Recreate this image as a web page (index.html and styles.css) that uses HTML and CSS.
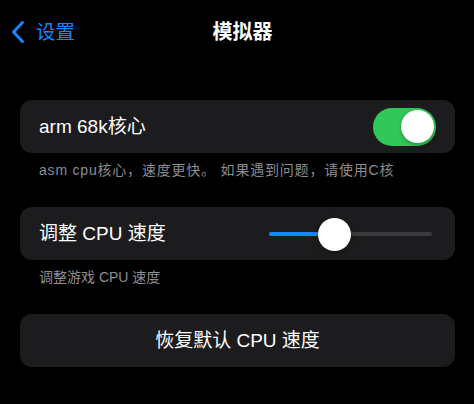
FILE: index.html
```html
<!DOCTYPE html>
<html lang="zh">
<head>
<meta charset="utf-8">
<link rel="stylesheet" href="styles.css">
</head>
<body>
<div class="screen">
  <header class="nav">
    <div class="back">
      <svg class="chev" width="14" height="24" viewBox="0 0 14 24"><path d="M11.5 2.5 L2.5 12 L11.5 21.5" fill="none" stroke="#1a84ff" stroke-width="3" stroke-linecap="round" stroke-linejoin="round"/></svg>
      <span class="back-text">设置</span>
    </div>
    <div class="title">模拟器</div>
    <div></div>
  </header>
  <main class="content">
    <section class="group">
      <div class="card row">
        <span class="label">arm 68k核心</span>
        <div class="toggle"><div class="knob"></div></div>
      </div>
      <p class="footer footer-wide">asm cpu核心，速度更快。 如果遇到问题，请使用C核</p>
    </section>
    <section class="group">
      <div class="card row">
        <span class="label">调整 CPU 速度</span>
        <div class="slider">
          <div class="track"><div class="fill" style="width:40%"></div></div>
          <div class="thumb" style="left:40%"></div>
        </div>
      </div>
      <p class="footer">调整游戏 CPU 速度</p>
    </section>
    <section class="group">
      <div class="card button">恢复默认 CPU 速度</div>
    </section>
  </main>
</div>
</body>
</html>
```
FILE: styles.css
```css
* { box-sizing: border-box; }
html, body { margin: 0; padding: 0; background: #000; }
body {
  font-family: "Liberation Sans", "Noto Sans CJK SC", sans-serif;
  color: #fff;
  width: 474px;
  height: 404px;
  overflow: hidden;
}
.nav {
  height: 64px;
  display: grid;
  grid-template-columns: 1fr auto 1fr;
  align-items: center;
  padding: 0 0 0 11px;
}
.back {
  display: flex;
  align-items: center;
  gap: 11px;
  color: #1a84ff;
}
.chev { display: block; }
.back-text { font-size: 19.5px; line-height: 24px; }
.title { font-size: 20px; font-weight: 600; line-height: 24px; }
.content {
  padding: 36px 19px 0 20px;
  display: flex;
  flex-direction: column;
  gap: 27px;
}
.group { display: flex; flex-direction: column; }
.card {
  background: #1c1c1e;
  border-radius: 12px;
  height: 53px;
}
.row {
  display: flex;
  align-items: center;
  justify-content: space-between;
  padding: 0 19px 0 19px;
}
.label { font-size: 19px; line-height: 24px; }
.footer {
  margin: 7px 0 0 19px;
  font-size: 14px;
  line-height: 20px;
  color: #8d8d92;
}
.footer-wide { letter-spacing: 0.8px; }
.toggle {
  width: 63px;
  height: 38px;
  border-radius: 19px;
  background: #32c759;
  display: flex;
  align-items: center;
  justify-content: flex-end;
  padding: 0 2.5px;
}
.knob {
  width: 33px;
  height: 33px;
  border-radius: 50%;
  background: #fff;
  box-shadow: 0 2px 4px rgba(0,0,0,0.25);
}
.slider {
  position: relative;
  width: 163px;
  height: 32px;
  display: flex;
  align-items: center;
  margin-right: 4px;
}
.track {
  width: 100%;
  height: 4px;
  border-radius: 2px;
  background: #3a3a3d;
  overflow: hidden;
}
.fill { height: 100%; background: #1a84ff; }
.thumb {
  position: absolute;
  top: 0;
  width: 33px;
  height: 33px;
  margin-left: -16px;
  border-radius: 50%;
  background: #fff;
  box-shadow: 0 2px 6px rgba(0,0,0,0.3);
}
.button {
  display: flex;
  align-items: center;
  justify-content: center;
  font-size: 19px;
  line-height: 24px;
}
```
